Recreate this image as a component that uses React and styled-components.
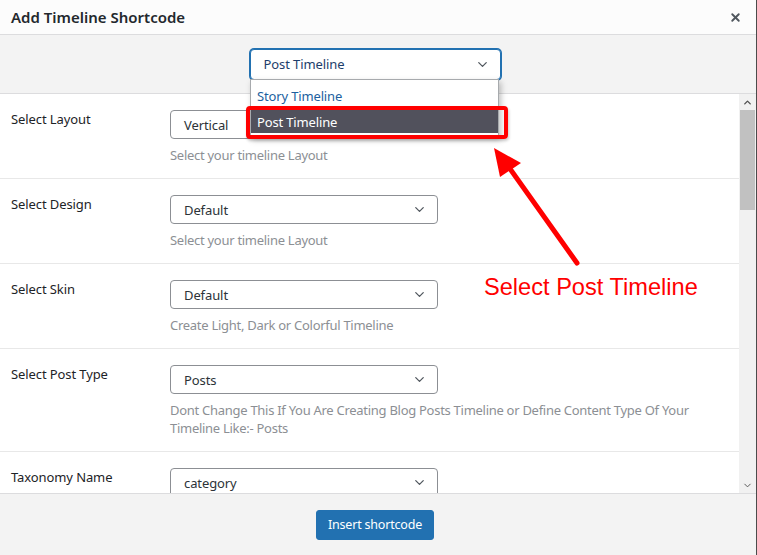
import React from 'react'
import styled, {createGlobalStyle} from 'styled-components'
import {X, ChevronDown, ChevronUp} from 'lucide-react'

const Global = createGlobalStyle`
  html, body {
    margin: 0;
    padding: 0;
    background: #fff;
  }
  body {
    font-family: "Noto Sans", "Open Sans", sans-serif;
    font-size: 13px;
    color: #1d2327;
  }
`

const Modal = styled.div`
  position: relative;
  width: 757px;
  height: 555px;
  display: flex;
  flex-direction: column;
  box-sizing: border-box;
  border-right: 1px solid #4b4b4b;
  overflow: hidden;
`

const Header = styled.div`
  height: 34px;
  flex: none;
  display: flex;
  align-items: center;
  justify-content: space-between;
  padding: 0 14px 0 11px;
  background: #fcfcfc;
  border-bottom: 1px solid #dcdcde;
`

const Title = styled.h1`
  margin: 0;
  font-size: 15px;
  font-weight: 600;
  color: #23282d;
`

const Close = styled.button`
  border: 0;
  background: none;
  padding: 0;
  display: flex;
  color: #50575e;
`

const TopBar = styled.div`
  height: 58px;
  flex: none;
  display: flex;
  align-items: center;
  justify-content: center;
  padding-right: 6px;
  background: #f3f3f3;
  border-bottom: 1px solid #dcdcde;
`

const Select = styled.div`
  box-sizing: border-box;
  width: ${p => p.$width || 268}px;
  height: ${p => p.$height || 29}px;
  display: flex;
  align-items: center;
  justify-content: space-between;
  padding: 0 10px 0 13px;
  background: #fff;
  border: 1px solid ${p => (p.$focus ? '#2271b1' : '#8c8f94')};
  box-shadow: ${p => (p.$focus ? '0 0 0 1px #2271b1' : 'none')};
  border-radius: 4px;
  font-size: 13px;
  color: ${p => (p.$focus ? '#1d3e6b' : '#2c3338')};
  letter-spacing: -0.1px;
`

const Body = styled.div`
  flex: 1;
  display: flex;
  min-height: 0;
`

const Fields = styled.div`
  flex: 1;
  overflow: hidden;
  background: #fff;
`

const Row = styled.div`
  display: grid;
  grid-template-columns: 159px 1fr;
  padding: 16px 30px 14px 11px;
  border-bottom: 1px solid #e8e8e8;
`

const Label = styled.div`
  line-height: 18px;
  font-size: 13px;
  color: #1d2327;
  letter-spacing: -0.1px;
`

const Desc = styled.div`
  margin-top: 7px;
  line-height: 18px;
  font-size: 13px;
  color: #8c8f94;
  letter-spacing: -0.28px;
`

const Scrollbar = styled.div`
  width: 17px;
  flex: none;
  display: flex;
  flex-direction: column;
  background: #f1f1f1;
  color: #505050;
`

const ScrollArrow = styled.div`
  height: 16px;
  display: flex;
  align-items: center;
  justify-content: center;
`

const Thumb = styled.div`
  height: 100px;
  margin: 0 1px;
  background: #c1c1c1;
`

const Track = styled.div`
  flex: 1;
`

const Footer = styled.div`
  height: 61px;
  flex: none;
  display: flex;
  align-items: center;
  justify-content: center;
  padding-right: 6px;
  background: #f3f3f3;
  border-top: 1px solid #dcdcde;
`

const Button = styled.button`
  height: 30px;
  padding: 0 11px;
  border: 1px solid #2271b1;
  border-radius: 3px;
  background: #2271b1;
  color: #fff;
  font-family: inherit;
  font-size: 12.5px;
  letter-spacing: -0.2px;
`

const Menu = styled.div`
  position: absolute;
  left: 250px;
  top: 79px;
  width: 249px;
  box-sizing: border-box;
  padding: 6px 0 3px;
  background: #fff;
  border: 1px solid #a7aaad;
  box-shadow: 2px 3px 6px rgba(0, 0, 0, 0.25);
`

const Option = styled.div`
  box-sizing: border-box;
  height: ${p => (p.$active ? 25 : 22)}px;
  display: flex;
  align-items: center;
  padding: ${p => (p.$active ? '3px 0 0 6px' : '0 0 2px 6px')};
  font-size: 13px;
  letter-spacing: -0.15px;
  color: ${p => (p.$active ? '#fff' : '#1c5fa0')};
  background: ${p => (p.$active ? '#51515c' : 'transparent')};
`

const Highlight = styled.div`
  position: absolute;
  left: 246px;
  top: 106px;
  width: 262px;
  height: 33px;
  box-sizing: border-box;
  border: 4px solid #ff0000;
  border-radius: 4px;
  box-shadow: 1px 2px 3px rgba(0, 0, 0, 0.2);
`

const Note = styled.div`
  position: absolute;
  left: 484px;
  top: 274px;
  font-family: "Liberation Sans", Arial, sans-serif;
  font-size: 23.6px;
  color: #ff0000;
  white-space: nowrap;
`

const Arrow = styled.svg`
  position: absolute;
  left: 0;
  top: 0;
  pointer-events: none;
`

const rows = [
  {label: 'Select Layout', value: 'Vertical', desc: ['Select your timeline Layout']},
  {label: 'Select Design', value: 'Default', desc: ['Select your timeline Layout']},
  {label: 'Select Skin', value: 'Default', desc: ['Create Light, Dark or Colorful Timeline']},
  {
    label: 'Select Post Type',
    value: 'Posts',
    desc: [
      'Dont Change This If You Are Creating Blog Posts Timeline or Define Content Type Of Your',
      'Timeline Like:- Posts',
    ],
  },
  {label: 'Taxonomy Name', value: 'category', desc: []},
]

export default function App() {
  return (
    <>
      <Global />
      <Modal>
        <Header>
          <Title>Add Timeline Shortcode</Title>
          <Close>
            <X size={13} strokeWidth={3.5} />
          </Close>
        </Header>
        <TopBar>
          <Select $focus $width={251} $height={31}>
            Post Timeline
            <ChevronDown size={15} strokeWidth={2} color="#50575e" />
          </Select>
        </TopBar>
        <Body>
          <Fields>
            {rows.map(r => (
              <Row key={r.label}>
                <Label>{r.label}</Label>
                <div>
                  <Select>
                    {r.value}
                    <ChevronDown size={15} strokeWidth={2} color="#50575e" />
                  </Select>
                  {r.desc.length > 0 && (
                    <Desc>
                      {r.desc.map(d => (
                        <div key={d}>{d}</div>
                      ))}
                    </Desc>
                  )}
                </div>
              </Row>
            ))}
          </Fields>
          <Scrollbar>
            <ScrollArrow>
              <ChevronUp size={11} strokeWidth={3} />
            </ScrollArrow>
            <Thumb />
            <Track />
            <ScrollArrow>
              <ChevronDown size={11} strokeWidth={2} />
            </ScrollArrow>
          </Scrollbar>
        </Body>
        <Footer>
          <Button>Insert shortcode</Button>
        </Footer>

        <Menu>
          <Option>Story Timeline</Option>
          <Option $active>Post Timeline</Option>
        </Menu>
        <Highlight />
        <Arrow width="757" height="555" viewBox="0 0 757 555">
          <line x1="577" y1="263" x2="508" y2="166" stroke="#ff0000" strokeWidth="5" strokeLinecap="round" />
          <polygon points="494,148 500,177 521,163" fill="#ff0000" />
        </Arrow>
        <Note>Select Post Timeline</Note>
      </Modal>
    </>
  )
}
